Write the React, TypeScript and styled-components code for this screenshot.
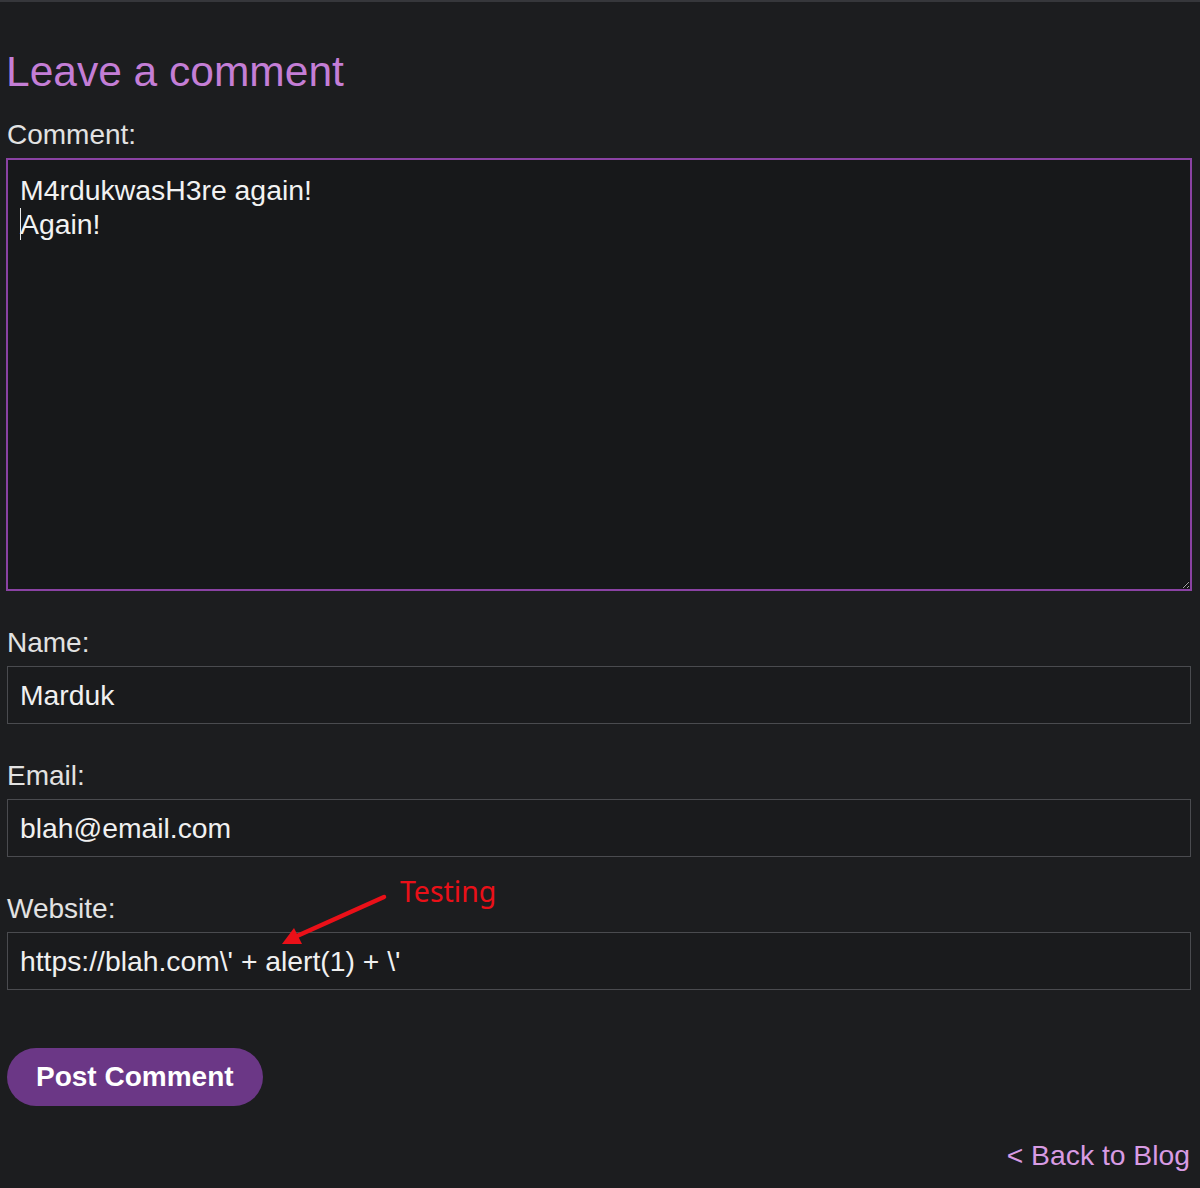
import React from "react";
import styled, { createGlobalStyle } from "styled-components";

const Global = createGlobalStyle`
  html, body {
    margin: 0;
    padding: 0;
    background: #1c1d1f;
  }
  body {
    font-family: "Liberation Sans", Arial, sans-serif;
    color: #e4e4e4;
  }
`;

const Page = styled.div`
  border-top: 2px solid #36373b;
  min-height: 1186px;
  box-sizing: border-box;
  padding: 45px 8px 0 6px;
  display: flex;
  flex-direction: column;
`;

const Heading = styled.h2`
  margin: 0 0 21px;
  font-size: 42.5px;
  line-height: 50px;
  font-weight: 400;
  color: #c47ed6;
`;

const Form = styled.form`
  display: flex;
  flex-direction: column;
  gap: 35px;
`;

const Field = styled.div`
  position: relative;
  display: flex;
  flex-direction: column;
  gap: 6px;
`;

const Label = styled.label`
  font-size: 28px;
  line-height: 34px;
  color: #e2e2e2;
  padding-left: 1px;
`;

const TextAreaWrap = styled.div`
  position: relative;
`;

const TextArea = styled.textarea`
  display: block;
  box-sizing: border-box;
  width: 100%;
  height: 433px;
  margin: 0;
  padding: 13px 12px;
  border: 2px solid #8a42a3;
  background: #17181a;
  color: #f2f2f2;
  font-family: "Liberation Sans", Arial, sans-serif;
  font-size: 28.4px;
  line-height: 34px;
  outline: none;
  color-scheme: dark;
`;

const Caret = styled.span`
  position: absolute;
  left: 14px;
  top: 50px;
  width: 1px;
  height: 32px;
  background: #e8e8e8;
`;

const Input = styled.input`
  display: block;
  box-sizing: border-box;
  width: calc(100% - 2px);
  margin: 0 0 0 1px;
  height: 58px;
  padding: 0 12px;
  border: 1px solid #4a4b4f;
  background: #1a1b1d;
  color: #f0f0f0;
  font-family: "Liberation Sans", Arial, sans-serif;
  font-size: 28.3px;
  outline: none;
`;

const Annotation = styled.span`
  position: absolute;
  left: 394px;
  top: -18px;
  font-family: "Noto Sans", "Open Sans", sans-serif;
  font-size: 28.5px;
  line-height: 34px;
  color: #ea1018;
`;

const ArrowSvg = styled.svg`
  position: absolute;
  left: 264px;
  top: -2px;
  width: 120px;
  height: 60px;
  overflow: visible;
`;

const ButtonRow = styled.div`
  margin-top: 58px;
`;

const Button = styled.button`
  height: 58px;
  margin-left: 1px;
  padding: 0 29px;
  border: none;
  border-radius: 29px;
  background: #6b3786;
  color: #ffffff;
  font-family: "Liberation Sans", Arial, sans-serif;
  font-size: 28px;
  font-weight: 700;
  cursor: pointer;
`;

const Footer = styled.div`
  margin-top: 32px;
  display: flex;
  justify-content: flex-end;
  padding-right: 2px;
`;

const BackLink = styled.a`
  font-size: 28.3px;
  line-height: 34px;
  color: #d89be3;
  text-decoration: none;
`;

export default function App() {
  return (
    <>
      <Global />
      <Page>
        <Heading>Leave a comment</Heading>
        <Form onSubmit={(e) => e.preventDefault()}>
          <Field>
            <Label htmlFor="comment">Comment:</Label>
            <TextAreaWrap>
              <TextArea
                id="comment"
                defaultValue={"M4rdukwasH3re again!\nAgain!"}
              />
              <Caret />
            </TextAreaWrap>
          </Field>
          <Field>
            <Label htmlFor="name">Name:</Label>
            <Input id="name" defaultValue="Marduk" />
          </Field>
          <Field>
            <Label htmlFor="email">Email:</Label>
            <Input id="email" defaultValue="blah@email.com" />
          </Field>
          <Field>
            <Label htmlFor="website">Website:</Label>
            <Input id="website" defaultValue={"https://blah.com\\' + alert(1) + \\'"} />
            <Annotation>Testing</Annotation>
            <ArrowSvg viewBox="0 0 120 60">
              <line
                x1="114"
                y1="7"
                x2="27"
                y2="46"
                stroke="#ea1018"
                strokeWidth="4.5"
                strokeLinecap="round"
              />
              <polygon points="12,54 32,54 24,38" fill="#ea1018" />
            </ArrowSvg>
          </Field>
        </Form>
        <ButtonRow>
          <Button type="button">Post Comment</Button>
        </ButtonRow>
        <Footer>
          <BackLink href="#">&lt; Back to Blog</BackLink>
        </Footer>
      </Page>
    </>
  );
}
